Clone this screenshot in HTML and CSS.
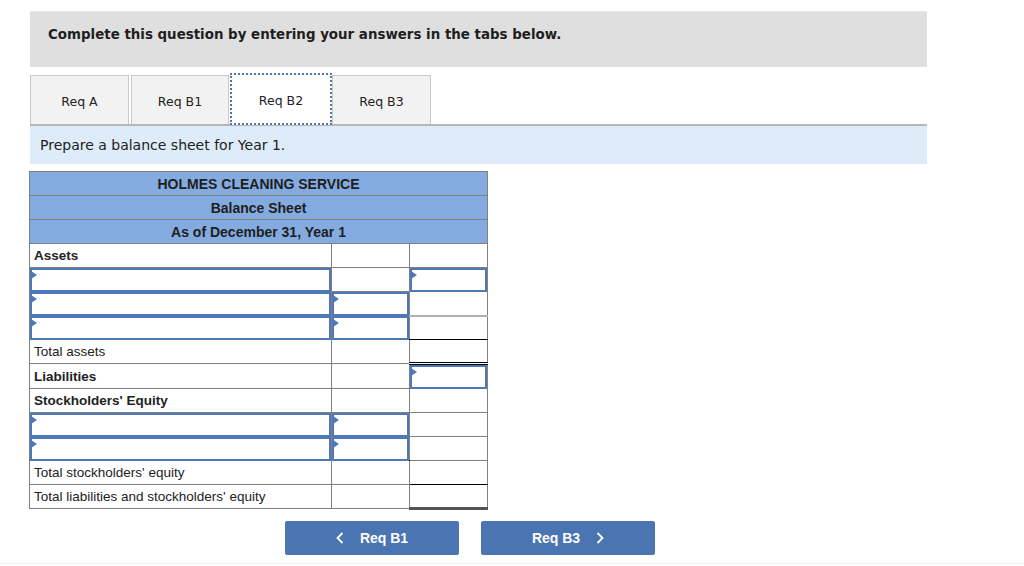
FILE: index.html
```html
<!DOCTYPE html>
<html>
<head>
<meta charset="utf-8">
<link rel="stylesheet" href="styles.css">
</head>
<body>
<div class="page">
  <div class="prompt">Complete this question by entering your answers in the tabs below.</div>
  <div class="tabs">
    <div class="tab">Req A</div>
    <div class="tab">Req B1</div>
    <div class="tab active">Req B2</div>
    <div class="tab">Req B3</div>
  </div>
  <div class="instr">Prepare a balance sheet for Year 1.</div>
  <table class="bs">
    <colgroup><col class="c1"><col class="c2"><col class="c3"></colgroup>
    <tr class="hd"><td colspan="3">HOLMES CLEANING SERVICE</td></tr>
    <tr class="hd"><td colspan="3">Balance Sheet</td></tr>
    <tr class="hd"><td colspan="3">As of December 31, Year 1</td></tr>
    <tr><td class="b">Assets</td><td></td><td></td></tr>
    <tr><td class="in"><div class="box"></div></td><td></td><td class="in"><div class="box"></div></td></tr>
    <tr><td class="in"><div class="box"></div></td><td class="in"><div class="box"></div></td><td class="lite"></td></tr>
    <tr><td class="in"><div class="box"></div></td><td class="in ul"><div class="box"></div></td><td class="ul"></td></tr>
    <tr><td>Total assets</td><td></td><td class="dbl"></td></tr>
    <tr><td class="b">Liabilities</td><td></td><td class="in"><div class="box"></div></td></tr>
    <tr><td class="b">Stockholders' Equity</td><td></td><td></td></tr>
    <tr><td class="in"><div class="box"></div></td><td class="in"><div class="box"></div></td><td></td></tr>
    <tr><td class="in"><div class="box"></div></td><td class="in ul"><div class="box"></div></td><td></td></tr>
    <tr><td>Total stockholders' equity</td><td></td><td class="ul"></td></tr>
    <tr><td>Total liabilities and stockholders' equity</td><td></td><td class="dbl2"></td></tr>
  </table>
  <div class="nav">
    <button class="btn"><svg class="chev" width="8" height="12" viewBox="0 0 8 12"><polyline points="6.5,1 1.5,6 6.5,11" fill="none" stroke="#fff" stroke-width="1.8"/></svg>Req B1</button>
    <button class="btn">Req B3<svg class="chev r" width="8" height="12" viewBox="0 0 8 12"><polyline points="1.5,1 6.5,6 1.5,11" fill="none" stroke="#fff" stroke-width="1.8"/></svg></button>
  </div>
</div>
<div class="foot"></div>
</body>
</html>
```
FILE: styles.css
```css
html, body { margin: 0; padding: 0; background: #fff; }
body { font-family: "DejaVu Sans", Verdana, sans-serif; color: #1e1e1e; }
.page { padding: 11px 0 0 30px; width: 897px; }
.prompt {
  background: #dfdfdf;
  border-top: 1px solid #e8e8e8;
  height: 56px;
  box-sizing: border-box;
  padding: 15px 0 0 18px;
  font-weight: bold;
  font-size: 13.4px;
}
.tabs { display: flex; margin-top: 8px; border-bottom: 2px solid #b7b7b7; height: 49px; }
.tab {
  width: 99px; height: 49px; box-sizing: border-box;
  background: #f2f2f2; border: 1px solid #c9c9c9; border-bottom: none;
  margin-right: 2px;
  display: flex; align-items: center; justify-content: center;
  font-size: 12.5px; color: #222; padding-top: 2px;
}
.tab:nth-child(2) { width: 98px; margin-right: 1px; }
.tab.active {
  width: 102px; height: 52px; margin-top: -2px; margin-right: 0;
  background: #fff; border: 2px dotted #4e76b3;
  position: relative; z-index: 1; padding-top: 3px;
}
.instr {
  background: #deebf8; height: 38px; box-sizing: border-box;
  padding: 11px 0 0 10px; font-size: 14px; color: #222;
}
.bs {
  margin: 7px 0 0 -1px; border-collapse: collapse;
  font-family: "Liberation Sans", Arial, sans-serif; font-size: 13.5px; color: #222;
  border: 1px solid #747474;
}
.c1 { width: 302px; } .c2 { width: 78px; } .c3 { width: 78px; }
.bs td { border: 1px solid #808080; height: 24px; padding: 0 4px; box-sizing: border-box; }
.bs tr.hd td { background: #84abe0; text-align: center; font-weight: bold; color: #1e1e1e; height: 24px; font-size: 14px; }
.bs td.b { font-weight: bold; }
.bs td.in { padding: 0; position: relative; }
.box {
  height: 24px; box-sizing: border-box; border: 2px solid #4f78b7; position: relative;
  margin: 0 0 -1px 0;
}
.box::before {
  content: ""; position: absolute; left: -1px; top: 1px;
  border-left: 6px solid #4f78b7; border-top: 4px solid transparent; border-bottom: 4px solid transparent;
}
.bs td.ul { border-bottom: 1px solid #000; }
.bs td.lite { border-bottom: 2px solid #b0b0b0; }
.bs td.dbl { border-top: 1px solid #000; border-bottom: 3px double #000; }
.bs td.dbl2 { border-bottom: 3px solid #555; }
.nav { display: flex; gap: 22px; margin: 11px 0 0 255px; }
.btn {
  width: 174px; height: 34px; border: none; border-radius: 2px;
  background: #4a74b2; color: #fff; font-family: "Liberation Sans", Arial, sans-serif;
  font-weight: bold; font-size: 14px; display: flex; align-items: center; justify-content: center;
  padding: 0;
}
.chev { margin-right: 16px; }
.chev.r { margin-right: 0; margin-left: 16px; }
.foot { margin-top: 8px; border-top: 1px solid #eeeeee; }
```
